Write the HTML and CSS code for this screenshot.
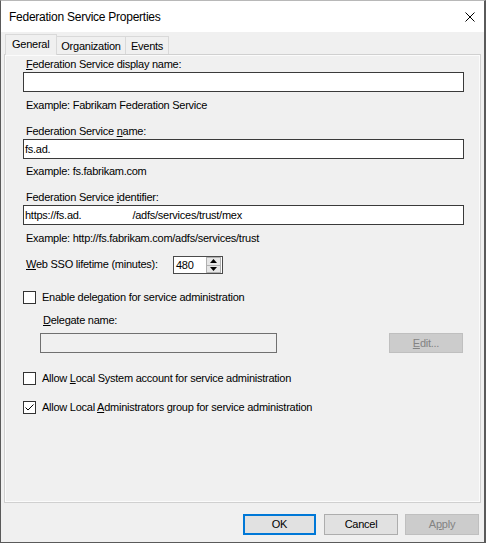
FILE: index.html
```html
<!DOCTYPE html>
<html>
<head>
<meta charset="utf-8">
<link rel="stylesheet" href="styles.css">
</head>
<body>
<div class="window">
  <div class="titlebar">
    <span class="title">Federation Service Properties</span>
    <svg class="close" width="10" height="10" viewBox="0 0 10 10"><path d="M0.5 0.5 L9.5 9.5 M9.5 0.5 L0.5 9.5" stroke="#000" stroke-width="1" fill="none"/></svg>
  </div>
  <div class="content">
    <div class="tabs">
      <div class="tab tab-general selected">General</div>
      <div class="tab tab-org">Organization</div>
      <div class="tab tab-events">Events</div>
    </div>
    <div class="panel">
      <div class="lbl first"><u>F</u>ederation Service display name:</div>
      <div class="input"></div>
      <div class="lbl ex">Example: Fabrikam Federation Service</div>

      <div class="lbl next">Federation Service <u>n</u>ame:</div>
      <div class="input">fs.ad.</div>
      <div class="lbl ex ex2">Example: fs.fabrikam.com</div>

      <div class="lbl next">Federation Service <u>i</u>dentifier:</div>
      <div class="input">https://fs.ad.<span class="redact"></span>/adfs/services/trust/mex</div>
      <div class="lbl ex">Example: http://fs.fabrikam.com/adfs/services/trust</div>

      <div class="sso-row">
        <div class="lbl sso-lbl"><u>W</u>eb SSO lifetime (minutes):</div>
        <div class="spinner">
          <span class="spin-val">480</span>
          <div class="spin-btns">
            <div class="spin-btn"><svg width="7" height="4" viewBox="0 0 7 4"><path d="M3.5 0 L7 4 L0 4 Z" fill="#000"/></svg></div>
            <div class="spin-btn"><svg width="7" height="4" viewBox="0 0 7 4"><path d="M0 0 L7 0 L3.5 4 Z" fill="#000"/></svg></div>
          </div>
        </div>
      </div>

      <div class="check-row cr1">
        <span class="box"></span>
        <span class="check-text">Enable delegation for service administration</span>
      </div>
      <div class="lbl deleg-lbl"><u>D</u>elegate name:</div>
      <div class="deleg-row">
        <div class="deleg-input"></div>
        <div class="btn disabled edit-btn"><u>E</u>dit...</div>
      </div>

      <div class="check-row cr2">
        <span class="box"></span>
        <span class="check-text">Allow <u>L</u>ocal System account for service administration</span>
      </div>
      <div class="check-row cr3">
        <span class="box"><svg width="11" height="11" viewBox="0 0 11 11"><path d="M1.5 5.5 L4 8 L9.5 2.5" stroke="#000" stroke-width="1" fill="none"/></svg></span>
        <span class="check-text">Allow Local <u>A</u>dministrators group for service administration</span>
      </div>
    </div>
    <div class="buttons">
      <div class="btn default">OK</div>
      <div class="btn">Cancel</div>
      <div class="btn disabled apply">A<u>p</u>ply</div>
    </div>
  </div>
</div>
</body>
</html>
```

FILE: styles.css
```css
* { box-sizing: border-box; }
html, body { margin: 0; padding: 0; }
body {
  width: 486px;
  height: 543px;
  overflow: hidden;
  font-family: "Liberation Sans", Arial, sans-serif;
  font-size: 11px;
  letter-spacing: -0.25px;
  color: #000;
}
u { text-decoration: underline; text-underline-offset: 1px; }

.window {
  width: 486px;
  height: 543px;
  border-left: 1px solid #5a5a5a;
  border-right: 2px solid #5a5a5a;
  border-bottom: 1px solid #5a5a5a;
  border-top: 1px solid #b8b8b8;
  display: flex;
  flex-direction: column;
  background: #f0f0f0;
}

.titlebar {
  height: 31px;
  background: #fff;
  display: flex;
  align-items: center;
  justify-content: space-between;
  padding: 0 9px 0 8px;
  flex: none;
}
.title {
  font-size: 12px;
  letter-spacing: -0.25px;
  line-height: 14px;
  margin-top: 1px;
}
.close { display: block; margin-top: 1px; }

.content {
  flex: 1;
  padding: 2px 3px 0 3px;
  display: flex;
  flex-direction: column;
}

.tabs {
  display: flex;
  align-items: flex-end;
  height: 20px;
  padding-left: 1px;
}
.tab {
  border: 1px solid #d9d9d9;
  border-bottom: none;
  background: #f0f0f0;
  height: 18px;
  line-height: 13px;
  padding-top: 3px;
  text-align: center;
}
.tab-general { width: 52px; }
.tab-org { width: 69px; border-left: none; }
.tab-events { width: 43px; border-left: none; }
.tab.selected {
  height: 21px;
  margin-bottom: -1px;
  position: relative;
  z-index: 1;
  padding-top: 3px;
  text-align: left;
  padding-left: 6px;
}

.panel {
  height: 449px;
  border: 1px solid #d0d0d0;
  box-shadow: inset 0 0 0 1px #fbfbfb;
  padding: 3px 16px 0 18px;
  background: #f0f0f0;
}

.lbl {
  height: 13px;
  line-height: 13px;
  margin-left: 3px;
  white-space: nowrap;
}
.lbl.next { margin-top: 13px; }
.lbl.ex { margin-top: 7px; }
.lbl.ex2 { margin-top: 6px; }

.input {
  margin-top: 1px;
  height: 20px;
  width: 441px;
  border: 1px solid #3a3a3a;
  background: #fff;
  line-height: 18px;
  padding-left: 1px;
  white-space: nowrap;
}
.redact { display: inline-block; width: 51px; }

.sso-row {
  display: flex;
  align-items: flex-start;
  margin-top: 11px;
  height: 18px;
}
.sso-lbl {
  width: 147px;
  margin-top: 2px;
  flex: none;
}
.spinner {
  width: 50px;
  height: 18px;
  border: 1px solid #4a4a4a;
  background: #fff;
  display: flex;
  justify-content: space-between;
  padding: 0 1px 0 2px;
}
.spin-val { line-height: 16px; }
.spin-btns {
  width: 15px;
  display: flex;
  flex-direction: column;
}
.spin-btn {
  flex: 1;
  background: #e6e6e6;
  border: 1px solid #b0b0b0;
  display: flex;
  align-items: center;
  justify-content: center;
}
.spin-btn + .spin-btn { border-top: none; }
.spin-btn svg { display: block; }

.check-row {
  display: flex;
  align-items: flex-start;
  height: 13px;
}
.cr1 { margin-top: 17px; }
.cr2 { margin-top: 19px; }
.cr3 { margin-top: 16px; }
.box {
  width: 13px;
  height: 13px;
  border: 1px solid #333;
  background: #fff;
  flex: none;
  display: flex;
  align-items: center;
  justify-content: center;
}
.box svg { display: block; }
.check-text {
  line-height: 13px;
  margin-left: 6px;
  white-space: nowrap;
}

.deleg-lbl { margin-left: 20px; margin-top: 10px; }
.deleg-row {
  display: flex;
  justify-content: space-between;
  align-items: flex-start;
  margin-top: 6px;
  padding-left: 17px;
  padding-right: 1px;
}
.deleg-input {
  width: 237px;
  height: 20px;
  border: 1px solid #707070;
  background: #f0f0f0;
}

.btn {
  width: 74px;
  height: 21px;
  border: 1px solid #adadad;
  background: #e1e1e1;
  text-align: center;
  line-height: 19px;
  white-space: nowrap;
}
.btn.default {
  border: 2px solid #0078d7;
  line-height: 17px;
  width: 73px;
}
.btn.disabled {
  background: #cccccc;
  border-color: #bfbfbf;
  color: #838383;
}
.btn.apply { margin-left: -1px; }
.edit-btn { height: 20px; line-height: 18px; }

.buttons {
  display: flex;
  justify-content: flex-end;
  gap: 8px;
  margin-top: 11px;
  padding-right: 2px;
}
```
